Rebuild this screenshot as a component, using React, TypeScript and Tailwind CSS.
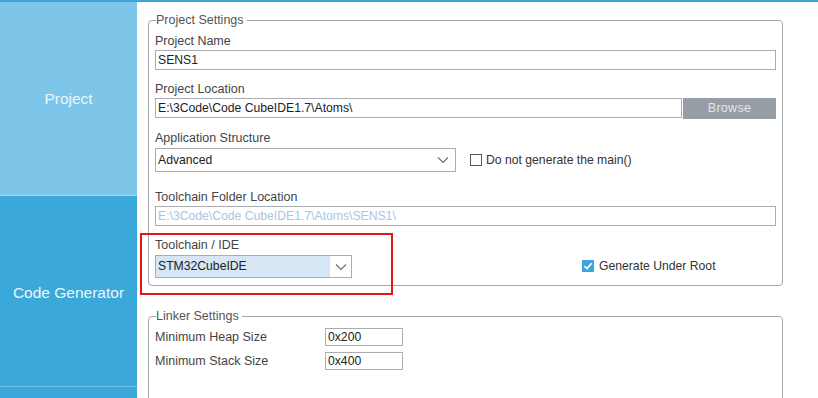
import React from "react";

const Chevron = () => (
  <svg width="12" height="8" viewBox="0 0 12 8" className="shrink-0">
    <path d="M1 1.5 L6 6.5 L11 1.5" fill="none" stroke="#6b6f73" strokeWidth="1.1" />
  </svg>
);

const CheckOn = () => (
  <span className="w-[12px] h-[12px] bg-[#3ba7da] flex items-center justify-center shrink-0">
    <svg width="10" height="10" viewBox="0 0 10 10">
      <path d="M1.5 5.2 L4 7.6 L8.6 2.2" fill="none" stroke="#ffffff" strokeWidth="1.6" />
    </svg>
  </span>
);

export default function App() {
  return (
    <div
      className="w-[818px] h-[398px] overflow-hidden bg-white flex flex-col text-[12.5px]"
      style={{ fontFamily: '"Liberation Sans", Arial, sans-serif' }}
    >
      <div className="h-[2px] bg-[#3aa6da] shrink-0" />
      <div className="flex flex-1 min-h-0">
        {/* sidebar */}
        <div className="w-[137px] shrink-0 flex flex-col text-[15.5px] text-[#eaf6fc]">
          <div className="h-[193px] bg-[#7dc5e9] flex items-center justify-center pt-[1px]">Project</div>
          <div className="h-[1px] bg-[#a5d8f1]" />
          <div className="h-[190px] bg-[#3ba8da] flex items-center justify-center pt-[3px]">Code Generator</div>
          <div className="h-[1px] bg-[#6cbfe6]" />
          <div className="flex-1 bg-[#3ba8da]" />
        </div>

        {/* main */}
        <div className="relative flex-1 pl-[11px] pr-[35px] pt-[11px] text-[#444]">
          <fieldset className="border border-[#a4a8ac] rounded-[4px] px-[6px] pb-[7px]">
            <legend className="ml-[1px] pr-[3px] leading-[14px] text-[#555]">Project Settings</legend>
            <div className="mt-[7px] leading-[14px]">Project Name</div>
            <div className="mt-[2px] h-[20px] border border-[#a9adb1] flex items-center px-[2px] text-[#222] text-[12.2px]">SENS1</div>

            <div className="mt-[12px] leading-[14px]">Project Location</div>
            <div className="mt-[2px] flex gap-[1px]">
              <div className="flex-1 h-[20px] border border-[#a9adb1] flex items-center px-[2px] text-[#222] text-[12.2px]">
                E:\3Code\Code CubeIDE1.7\Atoms\
              </div>
              <div className="w-[93px] h-[21px] bg-[#979da4] text-[#e4e7ea] flex items-center justify-center tracking-[0.3px]">
                Browse
              </div>
            </div>

            <div className="mt-[12px] leading-[14px]">Application Structure</div>
            <div className="mt-[3px] flex items-center">
              <div className="w-[301px] h-[24px] border border-[#a9adb1] flex items-center justify-between pl-[2px] pr-[6px] text-[#222] text-[12.2px]">
                <span>Advanced</span>
                <Chevron />
              </div>
              <span className="ml-[14px] w-[12px] h-[12px] border border-[#555] bg-white shrink-0" />
              <span className="ml-[4px] text-[12.2px] text-[#333]">Do not generate the main()</span>
            </div>

            <div className="mt-[18px] leading-[14px]">Toolchain Folder Location</div>
            <div className="mt-[2px] h-[20px] border border-[#a9adb1] flex items-center px-[2px] text-[#a9c5e3] text-[12.2px]">
              E:\3Code\Code CubeIDE1.7\Atoms\SENS1\
            </div>

            <div className="mt-[12px] leading-[14px]">Toolchain / IDE</div>
            <div className="mt-[3px] flex items-center">
              <div className="w-[197px] h-[23px] border border-[#a9adb1] flex items-stretch text-[#222] text-[12.2px]">
                <div className="w-[174px] bg-[#d6e6f5] flex items-center pl-[2px]">STM32CubeIDE</div>
                <div className="flex-1 flex items-center justify-center">
                  <Chevron />
                </div>
              </div>
              <div className="ml-[230px] flex items-center gap-[5px]">
                <CheckOn />
                <span className="text-[12.2px] text-[#333]">Generate Under Root</span>
              </div>
            </div>
          </fieldset>

          <fieldset className="mt-[23px] h-[120px] border border-[#a4a8ac] rounded-[4px] px-[6px]">
            <legend className="ml-[1px] pr-[3px] leading-[14px] text-[#555]">Linker Settings</legend>
            <div className="mt-[5px] flex items-center">
              <span className="w-[170px] leading-[14px]">Minimum Heap Size</span>
              <div className="w-[78px] h-[18px] border border-[#a9adb1] flex items-center px-[2px] text-[#222] text-[12.2px]">0x200</div>
            </div>
            <div className="mt-[6px] flex items-center">
              <span className="w-[170px] leading-[14px]">Minimum Stack Size</span>
              <div className="w-[78px] h-[18px] border border-[#a9adb1] flex items-center px-[2px] text-[#222] text-[12.2px]">0x400</div>
            </div>
          </fieldset>

          {/* annotation */}
          <div className="absolute left-[3px] top-[231px] w-[253px] h-[62px] border-2 border-[#e3161b] pointer-events-none" />
        </div>
      </div>
    </div>
  );
}
